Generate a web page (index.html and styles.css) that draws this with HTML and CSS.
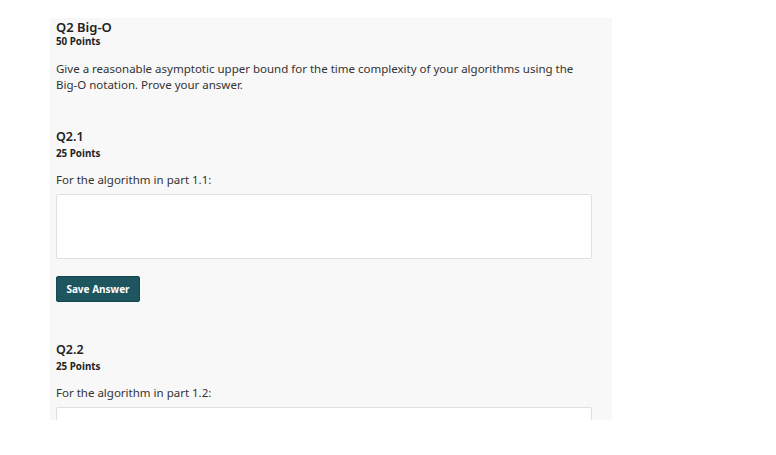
FILE: index.html
```html
<!DOCTYPE html>
<html>
<head>
<meta charset="utf-8">
<link rel="stylesheet" href="styles.css">
</head>
<body>
<div class="panel">
  <div class="q-title">Q2 Big-O</div>
  <div class="points">50 Points</div>
  <p class="desc">Give a reasonable asymptotic upper bound for the time complexity of your algorithms using the Big-O notation. Prove your answer.</p>

  <div class="sub">
    <div class="sub-title">Q2.1</div>
    <div class="points">25 Points</div>
    <p class="prompt">For the algorithm in part 1.1:</p>
    <div class="answer"></div>
    <button class="save">Save Answer</button>
  </div>

  <div class="sub second">
    <div class="sub-title">Q2.2</div>
    <div class="points">25 Points</div>
    <p class="prompt">For the algorithm in part 1.2:</p>
    <div class="answer"></div>
  </div>
</div>
</body>
</html>
```
FILE: styles.css
```css
html, body {
  margin: 0;
  padding: 0;
  background: #ffffff;
}
body {
  font-family: "Noto Sans", "Open Sans", sans-serif;
  color: #333333;
}
.panel {
  margin: 18px 0 0 50px;
  width: 536px;
  height: 402px;
  padding: 0 20px 0 6px;
  background: #f8f8f8;
  overflow: hidden;
}
.q-title {
  font-size: 13px;
  line-height: 18px;
  font-weight: 600;
  color: #222;
}
.points {
  font-size: 9.8px;
  line-height: 12px;
  font-weight: 700;
  color: #222;
}
.desc {
  margin: 13px 0 0;
  font-size: 11.5px;
  line-height: 16px;
}
.sub {
  margin-top: 36px;
}
.sub-title {
  font-size: 12.5px;
  line-height: 16px;
  font-weight: 600;
  color: #222;
}
.sub .points {
  margin-top: 3px;
}
.prompt {
  margin: 12px 0 0;
  font-size: 11.5px;
  line-height: 16px;
}
.answer {
  margin-top: 6px;
  height: 63px;
  background: #ffffff;
  border: 1px solid #e0e0e0;
  border-radius: 2px;
}
.save {
  display: block;
  margin-top: 17px;
  width: 84px;
  height: 26px;
  padding: 0;
  background: #1e5660;
  color: #ffffff;
  border: 1px solid #164650;
  border-radius: 2px;
  font-family: "Noto Sans", "Open Sans", sans-serif;
  font-size: 10px;
  font-weight: 700;
}
.second {
  margin-top: 40px;
}
```
